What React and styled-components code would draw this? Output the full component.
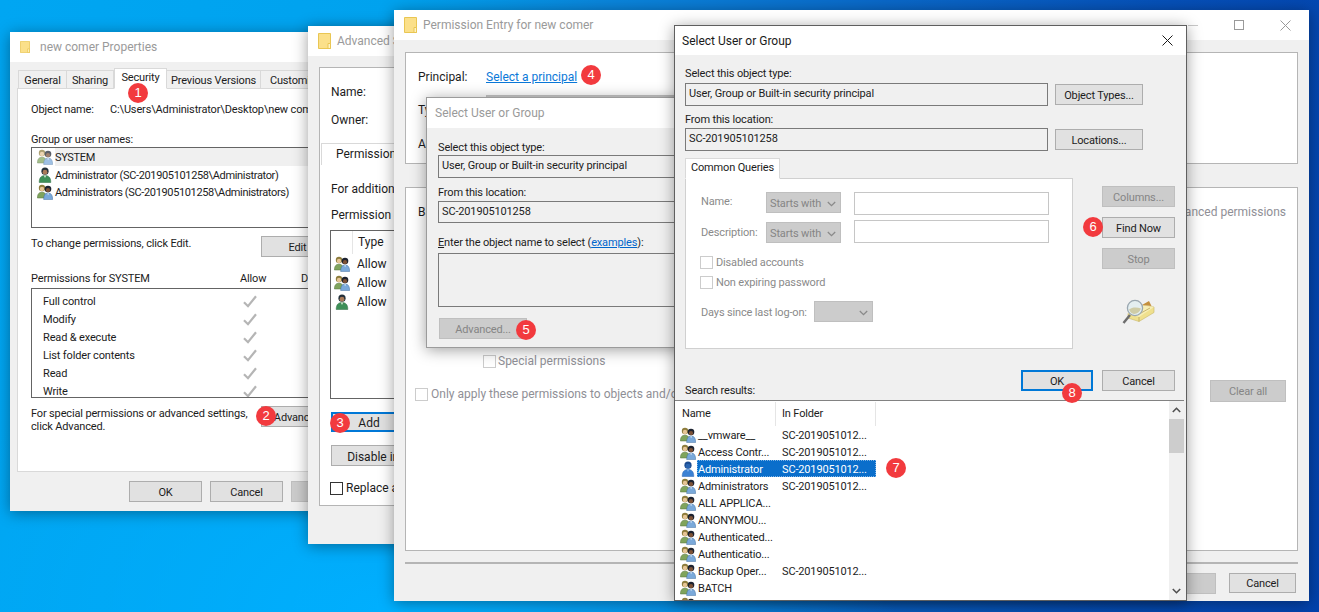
import React from "react";
import styled, { createGlobalStyle } from "styled-components";

const GlobalStyle = createGlobalStyle`
  html, body {
    margin: 0;
    padding: 0;
    overflow: hidden;
  }
  * {
    box-sizing: border-box;
  }
`;

const UI_FONT = `Roboto, "Liberation Sans", Arial, sans-serif`;

const Desktop = styled.div`
  position: relative;
  width: 1319px;
  height: 612px;
  overflow: hidden;
  font: 11px/16px ${UI_FONT};
  letter-spacing: -0.15px;
  color: #1c1c1c;
  background:
    radial-gradient(500px 300px at 30% 100%, #00b0ff 0%, rgba(0, 176, 255, 0) 100%),
    linear-gradient(100deg, #00a6f2 0%, #00a2ee 28%, #0a86dc 42%, #0a68c8 62%, #0650b8 82%, #0342ac 100%);
`;

const Win = styled.section`
  position: absolute;
  isolation: isolate;
  left: ${(p) => p.$x}px;
  top: ${(p) => p.$y}px;
  width: ${(p) => p.$w}px;
  height: ${(p) => p.$h}px;
  display: flex;
  flex-direction: column;
  background: #f0f0f0;
  border: ${(p) => (p.$border ? `1px solid ${p.$border}` : "none")};
  box-shadow: 0 2px 14px rgba(0, 0, 0, 0.38);
  overflow: hidden;
  font-size: ${(p) => (p.$large ? 12 : 11)}px;
  letter-spacing: ${(p) => (p.$large ? 0 : -0.15)}px;
`;

const TitleBar = styled.header`
  flex: none;
  height: ${(p) => p.$h || 30}px;
  display: flex;
  align-items: center;
  padding-left: ${(p) => p.$pad}px;
  background: #fff;
`;

const TitleText = styled.span`
  font-size: 12px;
  line-height: 16px;
  letter-spacing: 0;
  color: ${(p) => (p.$active ? "#1a1a1a" : "#9a9a9a")};
  white-space: nowrap;
  margin-left: ${(p) => p.$gap || 0}px;
`;

const Caption = styled.div`
  margin-left: auto;
  display: flex;
  align-items: center;
`;

const CaptionBtn = styled.span`
  display: flex;
  width: ${(p) => p.$w}px;
  justify-content: center;
`;

const Body = styled.div`
  flex: 1;
  min-height: 0;
  padding: ${(p) => p.$pad};
  display: flex;
  flex-direction: column;
`;

const Panel = styled.div`
  flex: none;
  width: ${(p) => p.$w}px;
  height: ${(p) => p.$h}px;
  margin-top: ${(p) => p.$mt || 0}px;
  padding: ${(p) => p.$pad || 0};
  background: #fff;
  border: 1px solid ${(p) => p.$line || "#d9d9d9"};
  overflow: hidden;
`;

const Tabs = styled.div`
  flex: none;
  height: 20px;
  display: flex;
  align-items: flex-end;
  padding-left: ${(p) => (p.$flush ? 0 : 1)}px;
  position: relative;
  z-index: 1;
  margin-bottom: -1px;
`;

const Tab = styled.div`
  height: ${(p) => (p.$on ? 21 : 19)}px;
  width: ${(p) => p.$w}px;
  flex: none;
  padding-top: ${(p) => (p.$on ? 1 : 2)}px;
  text-align: center;
  white-space: nowrap;
  overflow: hidden;
  background: ${(p) => (p.$on ? "#fff" : "#f0f0f0")};
  border: 1px solid #d9d9d9;
  border-bottom: ${(p) => (p.$on ? "1px solid #fff" : "1px solid #d9d9d9")};
  border-left-width: ${(p) => (p.$first || p.$on ? 1 : 0)}px;
`;

/* Roboto sits a pixel higher than the dialog font, so the line box is nudged down */
const Text = styled.div`
  margin-top: ${(p) => p.$mt || 0}px;
  margin-left: ${(p) => p.$ml || 0}px;
  margin-bottom: -1px;
  padding-top: 1px;
  line-height: ${(p) => p.$lh || 16}px;
  white-space: nowrap;
  width: ${(p) => (p.$w ? `${p.$w}px` : "auto")};
  flex: none;
  color: ${(p) => (p.$dim ? "#8a8a8a" : "inherit")};
`;

const SoftText = styled(Text)`
  font-size: 12px;
  letter-spacing: 0;
  margin-bottom: 0;
  padding-top: 0;
  color: ${(p) => (p.$dim ? "#8f8f96" : "#1c1c1c")};
`;

const CheckLabel = styled.span`
  padding-top: 2px;
`;

const Row = styled.div`
  display: flex;
  align-items: flex-start;
  justify-content: ${(p) => (p.$apart ? "space-between" : "flex-start")};
  margin-top: ${(p) => p.$mt || 0}px;
  margin-left: ${(p) => p.$ml || 0}px;
  gap: ${(p) => p.$gap || 0}px;
`;

const Btn = styled.div`
  flex: none;
  width: ${(p) => p.$w || 73}px;
  height: ${(p) => p.$h || 21}px;
  margin-top: ${(p) => p.$mt || 0}px;
  margin-left: ${(p) => p.$ml || 0}px;
  padding-top: 2px;
  display: flex;
  align-items: center;
  justify-content: center;
  white-space: nowrap;
  overflow: hidden;
  background: ${(p) => (p.$off ? "#cccccc" : "#e1e1e1")};
  color: ${(p) => (p.$off ? "#858585" : "#1c1c1c")};
  border: ${(p) => (p.$focus ? "2px solid #0078d7" : `1px solid ${p.$off ? "#bfbfbf" : "#adadad"}`)};
`;

const Field = styled.div`
  flex: none;
  width: ${(p) => p.$w}px;
  height: ${(p) => p.$h || 23}px;
  padding: 2px 3px 0;
  background: ${(p) => p.$bg || "#f0f0f0"};
  border: ${(p) => (p.$light ? "1px solid #c6c6c6" : "1px solid #7a7a7a")};
  white-space: nowrap;
  overflow: hidden;
  margin-top: ${(p) => p.$mt || 0}px;
  margin-left: ${(p) => p.$ml || 0}px;
`;

const Select = styled.div`
  flex: none;
  width: ${(p) => p.$w}px;
  height: 21px;
  margin-top: ${(p) => p.$mt || 0}px;
  padding: 2px 4px 0 3px;
  display: flex;
  align-items: center;
  justify-content: space-between;
  background: #cccccc;
  border: 1px solid #bfbfbf;
  color: #858585;
  white-space: nowrap;
`;

const Check = styled.span`
  flex: none;
  width: 13px;
  height: 13px;
  background: #fff;
  border: 1px solid ${(p) => (p.$dark ? "#333" : "#cccccc")};
`;

const CheckRow = styled.div`
  display: flex;
  align-items: center;
  gap: ${(p) => p.$gap || 3}px;
  margin-top: ${(p) => p.$mt || 0}px;
  margin-left: ${(p) => p.$ml || 0}px;
  white-space: nowrap;
  color: ${(p) => (p.$dim ? "#8a8a8a" : "inherit")};
`;

const Box = styled.div`
  flex: none;
  width: ${(p) => p.$w}px;
  height: ${(p) => p.$h}px;
  margin-top: ${(p) => p.$mt || 0}px;
  margin-left: ${(p) => p.$ml || 0}px;
  padding: ${(p) => p.$pad || 0};
  background: ${(p) => p.$bg || "#fff"};
  border: 1px solid ${(p) => p.$line || "#646464"};
  overflow: hidden;
`;

const UserRow = styled.div`
  height: ${(p) => p.$h || 17}px;
  display: flex;
  align-items: center;
  gap: 2px;
  white-space: nowrap;
  padding-left: ${(p) => p.$pad || 5}px;
`;

const UserName = styled.span`
  flex: 1;
  height: 100%;
  padding-top: 2px;
  display: flex;
  align-items: center;
  letter-spacing: -0.35px;
  background: ${(p) => (p.$on ? "#f0f0f0" : "transparent")};
`;

const PermRow = styled.div`
  height: 18px;
  display: grid;
  grid-template-columns: 200px 14px;
  align-items: center;
  padding-left: 11px;
`;

const PermName = styled.span`
  padding-top: 2px;
`;

const Link = styled.a`
  color: ${(p) => p.$color || "#0066cc"};
  text-decoration: underline;
`;

const Under = styled.span`
  text-decoration: underline;
`;

const Badge = styled.span`
  position: absolute;
  left: ${(p) => p.$x - 10}px;
  top: ${(p) => p.$y - 10}px;
  width: 20px;
  height: 20px;
  border-radius: 50%;
  display: flex;
  align-items: center;
  justify-content: center;
  background: #f23a3e;
  color: #fff;
  font: 13px/20px "Liberation Sans", Arial, sans-serif;
  letter-spacing: 0;
  z-index: 10;
`;

const ResultList = styled.div`
  flex: none;
  height: 200px;
  margin-top: 2px;
  margin-right: 2px;
  display: flex;
  background: #fff;
  border-top: 1px solid #828282;
  overflow: hidden;
`;

const ResultTable = styled.div`
  flex: 1;
  padding-left: 1px;
  overflow: hidden;
`;

const HeadRow = styled.div`
  display: flex;
  height: 25px;
  padding-top: 1px;
  color: #1c1c1c;
`;

const HeadCell = styled.div`
  width: 100px;
  height: 24px;
  padding: 4px 0 0 6px;
  border-right: 1px solid #e5e5e5;
`;

const ResultRow = styled.div`
  display: flex;
  height: 17px;
  align-items: center;
  white-space: nowrap;
`;

const ResultIcon = styled.span`
  display: flex;
  width: 21px;
  padding-left: 4px;
  flex: none;
`;

const ResultCells = styled.div`
  display: flex;
  align-items: center;
  width: 179px;
  height: 17px;
  padding-top: 2px;
  background: ${(p) => (p.$on ? "#0a6ecb" : "transparent")};
  color: ${(p) => (p.$on ? "#fff" : "inherit")};
  outline: ${(p) => (p.$on ? "1px dotted #7fb4e6" : "none")};
  outline-offset: -1px;
`;

const ResultName = styled.span`
  width: 79px;
  flex: none;
  padding-left: 1px;
  overflow: hidden;
`;

const ResultFolder = styled.span`
  padding-left: 6px;
`;

const ScrollBar = styled.div`
  flex: none;
  width: 15px;
  display: flex;
  flex-direction: column;
  align-items: center;
  background: #f0f0f0;
`;

const ScrollArrow = styled.span`
  flex: none;
  display: flex;
  height: 18px;
  align-items: center;
  margin-top: ${(p) => (p.$auto ? "auto" : 0)};
`;

const ScrollThumb = styled.span`
  flex: none;
  width: 15px;
  height: 34px;
  background: #cdcdcd;
`;

const Sep = styled.div`
  flex: none;
  height: 2px;
  margin-top: 11px;
  background: #b5b5b5;
`;

const PermissionTab = styled.div`
  width: 74px;
  height: 22px;
  margin-top: 15px;
  padding: 2px 0 0 14px;
  border: 1px solid #d9d9d9;
  border-bottom: none;
  overflow: hidden;
`;

const EntryHead = styled.div`
  height: 23px;
  margin-left: 21px;
  padding: 3px 0 0 5px;
  border-left: 1px solid #e5e5e5;
`;

const EntryRow = styled.div`
  height: 19px;
  display: flex;
  align-items: center;
  gap: 7px;
  padding-left: 3px;
`;

const MinLine = styled.span`
  width: 10px;
  height: 1px;
  background: #c8c8c8;
`;

const MaxBox = styled.span`
  width: 10px;
  height: 10px;
  border: 1px solid #9a9a9a;
`;

const QueryArea = styled.div`
  flex: none;
  padding: 10px 11px 0 10px;
`;

const QueryColumn = styled.div`
  flex: none;
  width: 388px;
  display: flex;
  flex-direction: column;
`;

const ActionColumn = styled.div`
  flex: none;
  width: 73px;
  padding-top: 27px;
  display: flex;
  flex-direction: column;
  gap: 10px;
`;

const SearchSlot = styled.div`
  display: flex;
  margin: 20px 0 0 19px;
`;

const Folder = ({ w = 13, h = 16 }) => (
  <svg width={w} height={h} viewBox="0 0 13 16">
    <path d="M.5.5h12v15H.5z" fill="#fbe08a" stroke="#e9c653" />
    <path d="M10 10.5h2.5v5H10z" fill="#fff3c4" stroke="#e9c653" />
  </svg>
);

const Group = ({ faded }) => (
  <svg width="16" height="16" viewBox="0 0 16 16" opacity={faded ? 0.72 : 1}>
    <circle cx="5" cy="4" r="3.2" fill="#8d7c3c" />
    <circle cx="5" cy="5" r="2.2" fill="#e6c595" />
    <path d="M.4 14c0-4 1.6-5.8 4.6-5.8s4.4 1.8 4.4 5.8z" fill="#7fa45c" stroke="#55703f" strokeWidth=".5" />
    <circle cx="11" cy="5" r="3.3" fill="#1c2230" />
    <circle cx="11" cy="6.2" r="2.1" fill="#7e5236" />
    <path d="M6.7 15.6c0-4.7 1.6-6.6 4.4-6.6s4.5 1.9 4.5 6.6z" fill="#7aa9da" stroke="#3f6c9e" strokeWidth=".5" />
    <path d="M10.2 9.2l.9 2 .9-2z" fill="#e6f0fa" />
  </svg>
);

const Person = ({ selected }) => (
  <svg width="16" height="16" viewBox="0 0 16 16">
    <circle cx="8" cy="4.2" r="3.6" fill={selected ? "#1c4c90" : "#23303a"} />
    <circle cx="8" cy="5.2" r="2.4" fill={selected ? "#2a64b0" : "#a97a58"} />
    <path d="M2.2 15.5c0-5 2-7 5.8-7s5.8 2 5.8 7z" fill={selected ? "#3c82d4" : "#3d8f57"} stroke={selected ? "#2a64b0" : "#2c6b40"} strokeWidth=".5" />
    <path d="M6.7 8.6l1.3 2.4 1.3-2.4z" fill={selected ? "#7fb2ea" : "#dcebd8"} />
  </svg>
);

const Tick = () => (
  <svg width="14" height="13" viewBox="0 0 14 13">
    <path d="M1 7.2l4 4L13 1.3" fill="none" stroke="#b5b5b5" strokeWidth="2.2" />
  </svg>
);

const Chevron = ({ up, w = 9, color = "#707070", sw = 1.3 }) => (
  <svg width={w} height="6" viewBox="0 0 9 6">
    <path d={up ? "M.8 5L4.5 1.3 8.2 5" : "M.8 1l3.7 3.7L8.2 1"} fill="none" stroke={color} strokeWidth={sw} />
  </svg>
);

const Cross = ({ size = 11, color = "#1a1a1a" }) => (
  <svg width={size} height={size} viewBox="0 0 11 11">
    <path d="M.5.5l10 10M10.5.5l-10 10" stroke={color} strokeWidth="1" />
  </svg>
);

const SearchArt = () => (
  <svg width="34" height="25" viewBox="0 0 34 25">
    <path d="M7 14.5L22 6.5l11 1.5v5.5L18 22.5 7 19z" fill="#efe08e" stroke="#c8b768" strokeWidth=".6" />
    <path d="M7 14.5l11 3.5 15-10-11-1.5z" fill="#f7eeb4" />
    <path d="M18 18v4.5M20 14l9-5" stroke="#b9a55c" strokeWidth=".8" />
    <path d="M21 6l7-4 2.5 5z" fill="#c48f3c" />
    <path d="M2.5 24L9 16" stroke="#6d6d6d" strokeWidth="2.4" />
    <circle cx="14" cy="9" r="7.6" fill="#e4eef0" stroke="#9aa7b0" strokeWidth="1.3" />
    <path d="M8 10.5c3-2.6 8-2.6 12-1-1 3.6-4 5.4-7 5.4-2 0-4-1.8-5-4.4z" fill="#cfcca6" />
  </svg>
);

const RESULTS = [
  ["__vmware__", "SC-2019051012..."],
  ["Access Contr...", "SC-2019051012..."],
  ["Administrator", "SC-2019051012...", true],
  ["Administrators", "SC-2019051012..."],
  ["ALL APPLICA...", ""],
  ["ANONYMOU...", ""],
  ["Authenticated...", ""],
  ["Authenticatio...", ""],
  ["Backup Oper...", "SC-2019051012..."],
  ["BATCH", ""],
  ["", ""],
];

const PERMISSIONS = ["Full control", "Modify", "Read & execute", "List folder contents", "Read", "Write"];

function PropertiesWindow() {
  return (
    <Win $x={10} $y={32} $w={400} $h={479}>
      <TitleBar $pad={10}>
        <Folder w={10} h={12} />
        <TitleText $gap={10}>new comer Properties</TitleText>
      </TitleBar>
      <Body $pad="7px 7px 0">
        <Tabs>
          <Tab $first $w={49}>General</Tab>
          <Tab $w={47}>Sharing</Tab>
          <Tab $on $w={53}>Security</Tab>
          <Tab $w={94}>Previous Versions</Tab>
          <Tab $w={70}>Customise</Tab>
        </Tabs>
        <Panel $w={386} $h={384} $pad="0 13px">
          <Row $mt={12}>
            <Text $w={79}>Object name:</Text>
            <Text>C:\Users\Administrator\Desktop\new comer</Text>
          </Row>
          <Text $mt={14}>Group or user names:</Text>
          <Box $w={300} $h={81} $mt={0}>
            <UserRow $h={18}><Group faded /><UserName $on>SYSTEM</UserName></UserRow>
            <UserRow><Person /><UserName>Administrator (SC-201905101258\Administrator)</UserName></UserRow>
            <UserRow><Group /><UserName>Administrators (SC-201905101258\Administrators)</UserName></UserRow>
          </Box>
          <Row $mt={7}>
            <Text $w={230}>To change permissions, click Edit.</Text>
            <Btn $mt={1}>Edit</Btn>
          </Row>
          <Row $mt={13}>
            <Text $w={209}>Permissions for SYSTEM</Text>
            <Text $w={61}>Allow</Text>
            <Text>Deny</Text>
          </Row>
          <Box $w={300} $h={110} $mt={2} $pad="3px 0 0">
            {PERMISSIONS.map((name) => (
              <PermRow key={name}>
                <PermName>{name}</PermName>
                <Tick />
              </PermRow>
            ))}
          </Box>
          <Row $mt={8}>
            <Text $w={230} $lh={13}>
              For special permissions or advanced settings,
              <br />
              click Advanced.
            </Text>
            <Btn>Advanced</Btn>
          </Row>
        </Panel>
        <Row $mt={9} $ml={112} $gap={8}>
          <Btn>OK</Btn>
          <Btn>Cancel</Btn>
          <Btn $off>Apply</Btn>
        </Row>
      </Body>
    </Win>
  );
}

function AdvancedWindow() {
  return (
    <Win $x={308} $y={26} $w={300} $h={518} $large>
      <TitleBar $pad={10}>
        <Folder />
        <TitleText $gap={6}>Advanced Security Settings</TitleText>
      </TitleBar>
      <Body $pad="11px 0 0 11px">
        <Panel $w={280} $h={439} $line="#b5b5b5" $pad="0 0 0 1px">
          <SoftText $mt={16} $ml={10}>Name:</SoftText>
          <SoftText $mt={12} $ml={10}>Owner:</SoftText>
          <PermissionTab>Permissions</PermissionTab>
          <SoftText $mt={16} $ml={10}>For additional information, double-click a permission entry.</SoftText>
          <SoftText $mt={10} $ml={10}>Permission entries:</SoftText>
          <Box $w={200} $h={169} $mt={7} $ml={9}>
            <EntryHead>Type</EntryHead>
            <EntryRow><Group /><span>Allow</span></EntryRow>
            <EntryRow><Group /><span>Allow</span></EntryRow>
            <EntryRow><Person /><span>Allow</span></EntryRow>
          </Box>
          <Btn $w={76} $h={20} $mt={13} $ml={10} $focus>Add</Btn>
          <Btn $w={134} $mt={13} $ml={10}>Disable inheritance</Btn>
          <CheckRow $mt={14} $ml={9}>
            <Check $dark />
            <span>Replace all child object permission entries</span>
          </CheckRow>
        </Panel>
      </Body>
    </Win>
  );
}

function EntryWindow() {
  return (
    <Win $x={394} $y={10} $w={915} $h={591}>
      <TitleBar $pad={10}>
        <Folder />
        <TitleText $gap={6}>Permission Entry for new comer</TitleText>
        <Caption>
          <CaptionBtn $w={46}><MinLine /></CaptionBtn>
          <CaptionBtn $w={46}><MaxBox /></CaptionBtn>
          <CaptionBtn $w={46}><Cross color="#9a9a9a" /></CaptionBtn>
          <CaptionBtn $w={1} />
        </Caption>
      </TitleBar>
      <Body $pad="12px 11px 0">
        <Panel $w={893} $h={112} $line="#b5b5b5" $pad="0 0 0 12px">
          <Row $mt={16}>
            <SoftText $w={68}>Principal:</SoftText>
            <SoftText><Link $color="#0a78d8" href="#">Select a principal</Link></SoftText>
          </Row>
          <Row $mt={10}>
            <SoftText $w={68} $mt={7}>Type:</SoftText>
            <Field $w={190} $h={21} $bg="#cccccc" $light>Allow</Field>
          </Row>
          <SoftText $mt={18}>Applies to:</SoftText>
        </Panel>
        <Panel $w={893} $h={364} $mt={23} $line="#b5b5b5" $pad="16px 11px 0">
          <Row $apart>
            <SoftText $ml={1}>Basic permissions:</SoftText>
            <SoftText $dim>Show advanced permissions</SoftText>
          </Row>
          <CheckRow $mt={133} $ml={66} $gap={2}>
            <Check />
            <SoftText $dim>Special permissions</SoftText>
          </CheckRow>
          <Row $apart $mt={11} $ml={-2}>
            <CheckRow $mt={6}>
              <Check />
              <SoftText $dim>Only apply these permissions to objects and/or containers within this container</SoftText>
            </CheckRow>
            <Btn $off $w={76} $h={22}>Clear all</Btn>
          </Row>
        </Panel>
        <Sep />
        <Row $mt={9} $ml={738} $gap={13}>
          <Btn $off>OK</Btn>
          <Btn $w={67} $h={20}>Cancel</Btn>
        </Row>
      </Body>
    </Win>
  );
}

function BackSelectWindow() {
  return (
    <Win $x={426} $y={97} $w={262} $h={251} $border="#9b9b9b">
      <TitleBar $pad={8}>
        <TitleText>Select User or Group</TitleText>
      </TitleBar>
      <Body $pad="11px 0 0 11px">
        <Text>Select this object type:</Text>
        <Field $w={300}>User, Group or Built-in security principal</Field>
        <Text $mt={6}>From this location:</Text>
        <Field $w={300} $mt={1} $h={22}>SC-201905101258</Field>
        <Text $mt={11}>
          <Under>E</Under>nter the object name to select (<Link href="#">examples</Link>):
        </Text>
        <Field $w={300} $h={54} $mt={3} />
        <Btn $off $w={88} $mt={11} $ml={1}>Advanced...</Btn>
      </Body>
    </Win>
  );
}

function FrontSelectWindow() {
  return (
    <Win $x={674} $y={25} $w={513} $h={576} $border="#5f5f5f">
      <TitleBar $h={29} $pad={7}>
        <TitleText $active>Select User or Group</TitleText>
        <Caption>
          <CaptionBtn $w={32}><Cross size={11} /></CaptionBtn>
          <CaptionBtn $w={3} />
        </Caption>
      </TitleBar>
      <Body $pad="0">
        <QueryArea>
          <Text>Select this object type:</Text>
          <Row $mt={2} $gap={7}>
            <Field $w={363}>User, Group or Built-in security principal</Field>
            <Btn $w={88} $mt={1}>Object Types...</Btn>
          </Row>
          <Text $mt={5}>From this location:</Text>
          <Row $mt={1} $gap={7}>
            <Field $w={363}>SC-201905101258</Field>
            <Btn $w={88} $mt={1}>Locations...</Btn>
          </Row>
          <Row $mt={8} $gap={29}>
            <QueryColumn>
              <Tabs $flush>
                <Tab $on $first $w={95}>Common Queries</Tab>
              </Tabs>
              <Panel $w={388} $h={171} $line="#d0d0d0" $pad="13px 0 0 15px">
                <Row>
                  <Text $w={65} $dim $mt={1}>Name:</Text>
                  <Select $w={75}>Starts with<Chevron color="#8a8a8a" /></Select>
                  <Field $w={195} $bg="#fff" $light $ml={13} />
                </Row>
                <Row $mt={5}>
                  <Text $w={65} $dim $mt={4}>Description:</Text>
                  <Select $w={75} $mt={2}>Starts with<Chevron color="#8a8a8a" /></Select>
                  <Field $w={195} $bg="#fff" $light $ml={13} />
                </Row>
                <CheckRow $mt={10} $ml={-1} $dim>
                  <Check />
                  <CheckLabel>Disabled accounts</CheckLabel>
                </CheckRow>
                <CheckRow $mt={2} $ml={-1} $dim>
                  <Check />
                  <CheckLabel>Non expiring password</CheckLabel>
                </CheckRow>
                <Row $mt={10}>
                  <Text $w={113} $dim $mt={3}>Days since last log-on:</Text>
                  <Select $w={59}>&nbsp;<Chevron color="#8a8a8a" /></Select>
                </Row>
              </Panel>
            </QueryColumn>
            <ActionColumn>
              <Btn $off>Columns...</Btn>
              <Btn>Find Now</Btn>
              <Btn $off>Stop</Btn>
              <SearchSlot><SearchArt /></SearchSlot>
            </ActionColumn>
          </Row>
          <Row $mt={21}>
            <Text $w={336} $mt={12}>Search results:</Text>
            <Btn $focus $w={72}>OK</Btn>
            <Btn $ml={9}>Cancel</Btn>
          </Row>
        </QueryArea>
        <ResultList>
          <ResultTable>
            <HeadRow>
              <HeadCell>Name</HeadCell>
              <HeadCell>In Folder</HeadCell>
            </HeadRow>
            {RESULTS.map(([name, folder, on], i) => (
              <ResultRow key={i}>
                <ResultIcon>{on ? <Person selected /> : <Group />}</ResultIcon>
                <ResultCells $on={on}>
                  <ResultName>{name}</ResultName>
                  <ResultFolder>{folder}</ResultFolder>
                </ResultCells>
              </ResultRow>
            ))}
          </ResultTable>
          <ScrollBar>
            <ScrollArrow><Chevron up w={9} color="#505050" sw={1.6} /></ScrollArrow>
            <ScrollThumb />
            <ScrollArrow $auto><Chevron w={9} color="#505050" sw={1.6} /></ScrollArrow>
          </ScrollBar>
        </ResultList>
      </Body>
    </Win>
  );
}

export default function App() {
  return (
    <>
      <GlobalStyle />
      <Desktop>
        <PropertiesWindow />
        <AdvancedWindow />
        <EntryWindow />
        <BackSelectWindow />
        <FrontSelectWindow />
        <Badge $x={138} $y={93}>1</Badge>
        <Badge $x={266} $y={416}>2</Badge>
        <Badge $x={340} $y={423}>3</Badge>
        <Badge $x={591} $y={75}>4</Badge>
        <Badge $x={526} $y={330}>5</Badge>
        <Badge $x={1093} $y={227}>6</Badge>
        <Badge $x={896} $y={468}>7</Badge>
        <Badge $x={1072} $y={393}>8</Badge>
      </Desktop>
    </>
  );
}
